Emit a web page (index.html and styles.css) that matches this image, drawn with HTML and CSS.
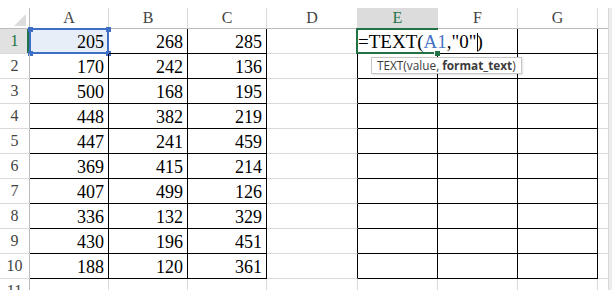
FILE: index.html
```html
<!DOCTYPE html>
<html lang="en">
<head>
    <meta charset="UTF-8">
    <meta name="viewport" content="width=device-width, initial-scale=1.0">
    <title>TEXT formula</title>
    <link rel="stylesheet" href="styles.css">
</head>
<body>
    <div class="sheet">
        <div class="row head">
            <div class="cell corner"><span class="tri"></span></div>
            <div class="cell col">A</div>
            <div class="cell col">B</div>
            <div class="cell col">C</div>
            <div class="cell col">D</div>
            <div class="cell col active">E</div>
            <div class="cell col">F</div>
            <div class="cell col">G</div>
            <div class="cell col"></div>
            <div class="edge"></div>
        </div>

        <div class="row">
            <div class="cell rh active">1</div>
            <div class="cell num bx ref">205
                <span class="ref-frame"></span>
                <span class="knob tl"></span><span class="knob tr"></span>
                <span class="knob bl"></span><span class="knob br"></span>
            </div>
            <div class="cell num bx">268</div>
            <div class="cell num bx">285</div>
            <div class="cell bd"></div>
            <div class="cell bx edit">=TEXT(<span class="arg">A1</span>,"0"<span class="caret"></span>)
                <span class="edit-frame"></span>
                <span class="fill"></span>
                <div class="tip">TEXT(value, <b>format_text</b>)</div>
            </div>
            <div class="cell bx"></div>
            <div class="cell bx"></div>
            <div class="cell"></div>
            <div class="edge"></div>
        </div>

        <div class="row">
            <div class="cell rh">2</div>
            <div class="cell num bx">170</div>
            <div class="cell num bx">242</div>
            <div class="cell num bx">136</div>
            <div class="cell bd"></div>
            <div class="cell bx"></div><div class="cell bx"></div><div class="cell bx"></div>
            <div class="cell"></div><div class="edge"></div>
        </div>

        <div class="row">
            <div class="cell rh">3</div>
            <div class="cell num bx">500</div>
            <div class="cell num bx">168</div>
            <div class="cell num bx">195</div>
            <div class="cell bd"></div>
            <div class="cell bx"></div><div class="cell bx"></div><div class="cell bx"></div>
            <div class="cell"></div><div class="edge"></div>
        </div>

        <div class="row">
            <div class="cell rh">4</div>
            <div class="cell num bx">448</div>
            <div class="cell num bx">382</div>
            <div class="cell num bx">219</div>
            <div class="cell bd"></div>
            <div class="cell bx"></div><div class="cell bx"></div><div class="cell bx"></div>
            <div class="cell"></div><div class="edge"></div>
        </div>

        <div class="row">
            <div class="cell rh">5</div>
            <div class="cell num bx">447</div>
            <div class="cell num bx">241</div>
            <div class="cell num bx">459</div>
            <div class="cell bd"></div>
            <div class="cell bx"></div><div class="cell bx"></div><div class="cell bx"></div>
            <div class="cell"></div><div class="edge"></div>
        </div>

        <div class="row">
            <div class="cell rh">6</div>
            <div class="cell num bx">369</div>
            <div class="cell num bx">415</div>
            <div class="cell num bx">214</div>
            <div class="cell bd"></div>
            <div class="cell bx"></div><div class="cell bx"></div><div class="cell bx"></div>
            <div class="cell"></div><div class="edge"></div>
        </div>

        <div class="row">
            <div class="cell rh">7</div>
            <div class="cell num bx">407</div>
            <div class="cell num bx">499</div>
            <div class="cell num bx">126</div>
            <div class="cell bd"></div>
            <div class="cell bx"></div><div class="cell bx"></div><div class="cell bx"></div>
            <div class="cell"></div><div class="edge"></div>
        </div>

        <div class="row">
            <div class="cell rh">8</div>
            <div class="cell num bx">336</div>
            <div class="cell num bx">132</div>
            <div class="cell num bx">329</div>
            <div class="cell bd"></div>
            <div class="cell bx"></div><div class="cell bx"></div><div class="cell bx"></div>
            <div class="cell"></div><div class="edge"></div>
        </div>

        <div class="row">
            <div class="cell rh">9</div>
            <div class="cell num bx">430</div>
            <div class="cell num bx">196</div>
            <div class="cell num bx">451</div>
            <div class="cell bd"></div>
            <div class="cell bx"></div><div class="cell bx"></div><div class="cell bx"></div>
            <div class="cell"></div><div class="edge"></div>
        </div>

        <div class="row">
            <div class="cell rh">10</div>
            <div class="cell num bx">188</div>
            <div class="cell num bx">120</div>
            <div class="cell num bx">361</div>
            <div class="cell bd"></div>
            <div class="cell bx"></div><div class="cell bx"></div><div class="cell bx"></div>
            <div class="cell"></div><div class="edge"></div>
        </div>

        <div class="row last">
            <div class="cell rh">11</div>
            <div class="cell"></div><div class="cell"></div><div class="cell"></div>
            <div class="cell"></div>
            <div class="cell"></div><div class="cell"></div><div class="cell"></div>
            <div class="cell"></div><div class="edge"></div>
        </div>
    </div>
</body>
</html>
```

FILE: styles.css
```css
body {
    margin: 0;
    padding-top: 8px;
    height: 290px;
    box-sizing: border-box;
    overflow: hidden;
    background: #fff;
    font-family: "Liberation Serif", "Times New Roman", serif;
    color: #000;
}
.row {
    display: grid;
    grid-template-columns: 30px 79px 79px 79px 91px 80px 80px 80px 11px 1fr;
    height: 25px;
}
.row.head {
    height: 21px;
}
.row.last {
    height: 11px;
    overflow: hidden;
}
.cell {
    box-sizing: border-box;
    border-right: 1px solid #dadada;
    border-bottom: 1px solid #dadada;
    position: relative;
    white-space: nowrap;
}
.edge {
    background: #ececec;
}

/* headers */
.head .cell {
    border-bottom-color: #bcbcbc;
    text-align: center;
    font-size: 16px;
    line-height: 20px;
    color: #444;
}
.corner {
    border-right-color: #bcbcbc;
}
.tri {
    position: absolute;
    right: 3px;
    bottom: 2px;
    width: 0;
    height: 0;
    border-left: 12px solid transparent;
    border-bottom: 12px solid #dcdcdc;
}
.col.active {
    background: #dcdcdc;
    color: #217346;
}
.rh {
    border-right-color: #bcbcbc;
    border-bottom-color: #dadada;
    text-align: center;
    font-size: 16px;
    line-height: 24px;
    color: #444;
}
.rh.active {
    background: #e1e1e1;
    color: #217346;
    box-shadow: inset -2px 0 0 #217346;
}

/* data cells */
.num {
    text-align: right;
    font-size: 18px;
    line-height: 22px;
    padding: 2px 4px 0 0;
}
.bx {
    border-right-color: #000;
    border-bottom-color: #000;
}
.bd {
    border-right-color: #000;
}

/* referenced cell A1 */
.ref {
    background: #e8eef8;
}
.ref-frame {
    position: absolute;
    top: -1px;
    left: -1px;
    right: -1px;
    bottom: -1px;
    border: 2px solid #3f6fc4;
}
.knob {
    position: absolute;
    width: 5px;
    height: 5px;
    background: #3f6fc4;
}
.knob.tl { left: -2px; top: -2px; }
.knob.tr { right: -3px; top: -2px; }
.knob.bl { left: -2px; bottom: -3px; }
.knob.br { right: -3px; bottom: -3px; }

/* cell in edit mode */
.edit {
    font-size: 19px;
    line-height: 22px;
    padding: 2px 0 0 0;
    border-right-color: transparent;
    z-index: 1;
}
.arg {
    color: #4472c4;
}
.caret {
    display: inline-block;
    width: 1px;
    height: 18px;
    margin-right: -1px;
    background: #000;
    vertical-align: -3px;
}
.edit-frame {
    position: absolute;
    top: -1px;
    left: -2px;
    right: -1px;
    bottom: -1px;
    border: 2px solid #217346;
    border-right: none;
}
.fill {
    position: absolute;
    right: -3px;
    bottom: -3px;
    width: 5px;
    height: 5px;
    background: #217346;
    border-left: 1px solid #fff;
    border-top: 1px solid #fff;
}
.tip {
    position: absolute;
    left: 13px;
    top: 28px;
    height: 17px;
    padding: 0 5px;
    box-sizing: border-box;
    border: 1px solid #c6c6c6;
    background: #fff;
    box-shadow: 1px 1px 2px rgba(0, 0, 0, 0.12);
    font-family: "Open Sans", "Noto Sans", sans-serif;
    font-size: 11.8px;
    line-height: 15px;
    color: #3c3c3c;
}
.tip b {
    font-weight: 700;
}
```
